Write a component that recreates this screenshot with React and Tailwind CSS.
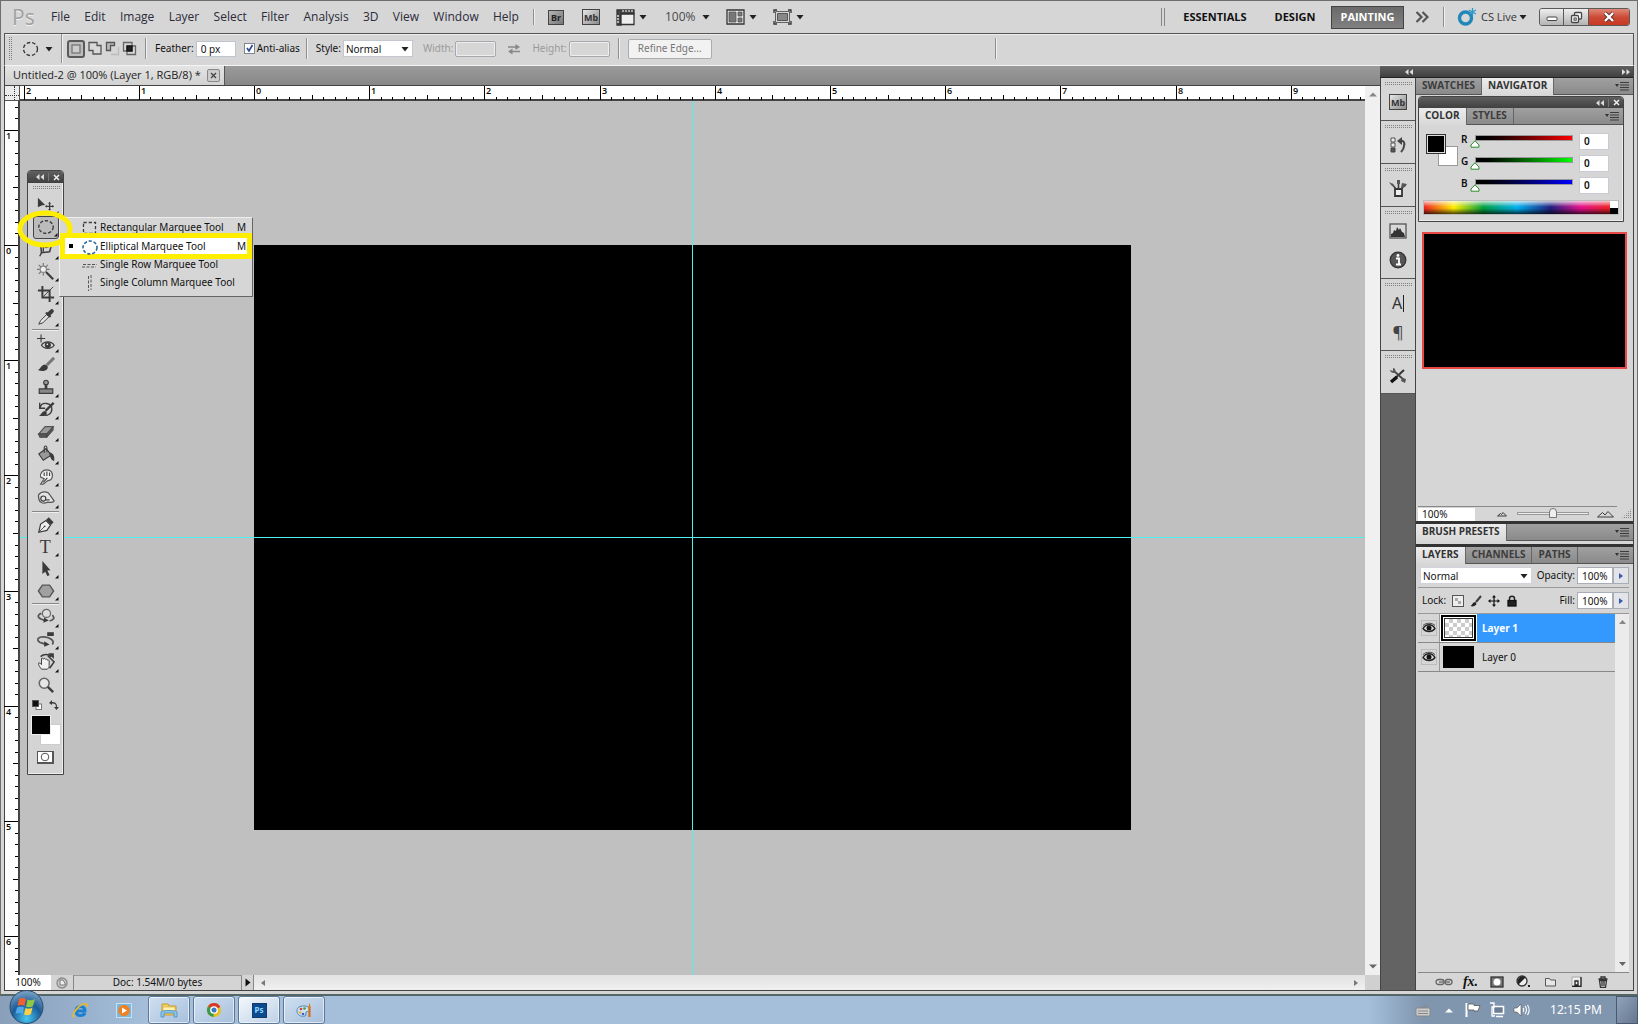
import React from "react";

const UI = "font-['Noto_Sans','Open_Sans',sans-serif]";
const UNIT = 115.2;

function Svg({ w = 20, h = 20, box, children, className = "" }) {
  return (
    <svg
      width={w}
      height={h}
      viewBox={box || `0 0 ${w} ${h}`}
      fill="none"
      stroke="#3c3c3c"
      strokeWidth="1.3"
      className={"shrink-0 " + className}
      aria-hidden="true"
    >
      {children}
    </svg>
  );
}

const Tri = ({ className = "" }) => (
  <Svg w={8} h={6} className={className}>
    <path d="M0.5 1h7L4 5.5z" fill="#222" stroke="none" />
  </Svg>
);

const Sep = ({ className = "" }) => (
  <div className={"w-px shrink-0 self-stretch border-r border-[#f0f0f0] bg-[#8f8f8f] box-content " + className} />
);

/* ---------- Menu bar ---------- */

const MENUS = ["File", "Edit", "Image", "Layer", "Select", "Filter", "Analysis", "3D", "View", "Window", "Help"];

function MenuBar() {
  return (
    <header className="flex h-8 shrink-0 items-center pl-2 pr-1">
      <span className="w-[39px] text-[21px] leading-6 text-[#a0a0a0] font-['Open_Sans'] [text-shadow:0_1px_0_#f4f4f4]">Ps</span>
      <nav className="flex w-[468px] justify-between text-xs text-[#2b2b3a] font-['Open_Sans']">
        {MENUS.map((m) => (
          <button key={m} className="leading-5">{m}</button>
        ))}
      </nav>
      <Sep className="my-2 ml-3.5" />
      <div className="ml-[13px] flex items-center">
        <button aria-label="Launch Bridge">
          <span className="flex h-[15px] w-4 items-center justify-center border border-[#444] bg-gradient-to-br from-[#b5b5b5] to-[#777] text-[9px] font-bold leading-none text-[#222]">Br</span>
        </button>
        <button aria-label="Launch Mini Bridge" className="ml-[18px]"><MbIcon /></button>
        <button aria-label="View extras" className="ml-4 flex items-center gap-1">
          <Svg w={19} h={17}>
            <path d="M1 1h17v4H5v11H1z" fill="#444" stroke="#333" />
            <path d="M5 5h13v10.500H5z" fill="#eee" stroke="#333" />
            <path d="M7 1v2M10 1v2M13 1v2M16 1v2M1 7h2M1 10h2M1 13h2" stroke="#ddd" />
          </Svg>
          <Tri />
        </button>
        <button className="ml-[18px] flex items-center gap-1.5 text-xs text-[#4a4a4a] font-['Open_Sans']">
          100% <Tri />
        </button>
        <button aria-label="Arrange documents" className="ml-4 flex items-center gap-1">
          <Svg w={19} h={16}>
            <path d="M1 1h17v14H1z" fill="#ececec" stroke="#333" />
            <path d="M3 3h7v10H3zM12 3h4v4h-4zM12 9h4v4h-4z" fill="#777" stroke="#555" strokeWidth=".8" />
          </Svg>
          <Tri />
        </button>
        <button aria-label="Screen mode" className="ml-4 flex items-center gap-1">
          <Svg w={19} h={16}>
            <path d="M1 4V1h3M15 1h3v3M18 12v3h-3M4 15H1v-3" stroke="#333" />
            <path d="M4.500 4.500h10v7h-10z" fill="#888" stroke="#555" strokeWidth="1" />
            <path d="M2.500 2.500h14v11h-14z" stroke="#555" strokeWidth=".9" />
          </Svg>
          <Tri />
        </button>
      </div>
      <div className="flex-1" />
      <div className="flex h-[18px] gap-px">
        <div className="w-px bg-[#888]" />
        <div className="ml-px w-px bg-[#888]" />
      </div>
      <div className="flex items-center text-[11px] font-bold font-['Open_Sans'] text-[#111]">
        <button className="ml-[15px] w-[70px]">ESSENTIALS</button>
        <button className="ml-[22px] w-[46px]">DESIGN</button>
        <button className="ml-[13px] h-[23px] w-[73px] border border-[#444] bg-gradient-to-b from-[#6a6a6a] to-[#808080] text-white">PAINTING</button>
      </div>
      <button aria-label="More workspaces" className="ml-[11px]">
        <Svg w={14} h={14}><path d="M1.500 2l5 5-5 5M7.500 2l5 5-5 5" stroke="#555" strokeWidth="2.200" /></Svg>
      </button>
      <Sep className="my-1.5 ml-3.5" />
      <button className="ml-3 flex items-center text-[11px] text-[#333] font-['Open_Sans']">
        <Svg w={20} h={18}>
          <circle cx="8.500" cy="10" r="6" stroke="#2088b8" strokeWidth="3.400" />
          <path d="M15.500 0v8M12 2l7 4M19 2l-7 4" stroke="#2f98c8" strokeWidth="1.300" />
        </Svg>
        <span className="ml-1 whitespace-nowrap">CS Live</span>
        <Tri className="ml-0.5" />
      </button>
      <div className="ml-3 flex h-[18px] w-[91px] shrink-0 overflow-hidden rounded-[3px] border border-[#5a5a5a]">
        <button aria-label="Minimize" className="flex w-6 items-center justify-center border-r border-[#5a5a5a] bg-gradient-to-b from-[#eee] to-[#b4b4b4]">
          <Svg w={12} h={12}><rect x="1" y="6" width="10" height="3.500" rx="1" fill="#fff" stroke="#444" strokeWidth="1" /></Svg>
        </button>
        <button aria-label="Restore" className="flex w-[25px] items-center justify-center border-r border-[#5a5a5a] bg-gradient-to-b from-[#eee] to-[#b4b4b4]">
          <Svg w={13} h={13}>
            <rect x="4.500" y="1.500" width="7" height="6.500" rx="1" fill="#fff" stroke="#444" />
            <rect x="1.500" y="4.500" width="7" height="7" rx="1" fill="#fff" stroke="#444" />
            <rect x="4" y="7" width="2.200" height="2.200" stroke="#444" strokeWidth="1" />
          </Svg>
        </button>
        <button aria-label="Close" className="flex flex-1 items-center justify-center bg-gradient-to-b from-[#e08878] via-[#cc4a36] to-[#c83822]">
          <Svg w={14} h={12}>
            <path d="M3 2l8 8M11 2l-8 8" stroke="#5a3030" strokeWidth="4" />
            <path d="M3 2l8 8M11 2l-8 8" stroke="#fff" strokeWidth="2.400" />
          </Svg>
        </button>
      </div>
    </header>
  );
}

function MbIcon() {
  return (
    <span className="flex h-4 w-[18px] items-center justify-center border border-[#444] bg-gradient-to-br from-[#e8e8e8] to-[#8a8a8a] text-[9px] font-bold leading-none text-[#333]">
      Mb
    </span>
  );
}

/* ---------- Options bar ---------- */

function Grip({ className = "" }) {
  return <div className={"bg-[conic-gradient(#808080_25%,transparent_0)] bg-[length:2px_2px] " + className} />;
}

function OptionsBar() {
  return (
    <div className="flex h-[33px] shrink-0 items-center border border-[#555] border-b-[#f4f4f4] pb-0.5 pl-[3px] text-[10px] text-[#111] shadow-[inset_0_1px_0_#eee]">
      <Grip className="h-6 w-1" />
      <button aria-label="Tool preset" className="ml-2.5 flex items-center gap-1.5">
        <Svg w={17} h={16}><ellipse cx="8.500" cy="8" rx="7" ry="6.500" strokeDasharray="3.500 2" stroke="#333" /></Svg>
        <Tri />
      </button>
      <Sep className="ml-2" />
      <div className="ml-1 flex items-center">
        <button aria-label="New selection" className="mr-[3px] flex h-[18px] w-[18px] items-center justify-center rounded-[3px] border-2 border-[#5a5a5a] bg-[#bdbdbd]">
          <Svg w={10} h={10}><rect x="1" y="1" width="8" height="8" fill="#ccc" stroke="#777" /></Svg>
        </button>
        <button aria-label="Add to selection">
          <Svg w={15} h={15}><path d="M1 1.500h8v3h4v8.500H5V9.500H1z" fill="#d8d8d8" stroke="#555" /></Svg>
        </button>
        <button aria-label="Subtract from selection" className="ml-0.5">
          <Svg w={15} h={15}><path d="M1.500 9.500v-8h8v3h-4v5z" fill="#bbb" stroke="#555" /><path d="M6 13.500h7.500V6" stroke="#bbb" /></Svg>
        </button>
        <button aria-label="Intersect with selection" className="ml-0.5">
          <Svg w={15} h={15}><path d="M1.500 1.500h8.500v8.500h-8.500zM5 5h8.500v8.500H5z" stroke="#666" /><rect x="5" y="5" width="5" height="5" fill="#222" stroke="#111" /></Svg>
        </button>
      </div>
      <Sep className="my-1 ml-2" />
      <label className="ml-2 flex items-center gap-0.5">
        Feather:
        <input defaultValue="0 px" className="h-4 w-10 border border-[#bfc5cc] bg-white px-1 text-[10px]" />
      </label>
      <label className="ml-2 flex items-center gap-0.5 whitespace-nowrap">
        <span className="relative flex">
          <input type="checkbox" defaultChecked className="h-[11px] w-[11px] appearance-none border border-[#7d8794] bg-white" />
          <Svg w={11} h={11} className="pointer-events-none absolute left-0 top-0"><path d="M3 5l2 3 3.500-6" stroke="#2a4a9a" strokeWidth="1.700" /></Svg>
        </span>
        Anti-alias
      </label>
      <Sep className="my-1 ml-1.5" />
      <label className="ml-2 flex items-center gap-0.5">
        Style:
        <span className="relative">
          <select className="h-[17px] w-[70px] appearance-none border border-[#c4c8ce] bg-white px-0.5 text-[10px] leading-none">
            <option>Normal</option>
          </select>
          <Tri className="pointer-events-none absolute right-1 top-1.5" />
        </span>
      </label>
      <label className="ml-2.5 flex items-center gap-0.5 text-[#9a9a9a]">
        Width:
        <input disabled className="h-4 w-[41px] rounded-[2px] border border-[#a5a9ad] bg-[#d6d6d6] shadow-[inset_0_0_0_1px_#eee]" />
      </label>
      <button aria-label="Swap width and height" className="ml-3">
        <Svg w={12} h={12}><path d="M0 4h8M12 8.500H3" stroke="#888" strokeWidth="1.500" /><path d="M7.500 1L12 4 7.500 7zM4.500 5.500L0 8.500l4.500 3z" fill="#888" stroke="none" /></Svg>
      </button>
      <label className="ml-3 flex items-center gap-0.5 text-[#9a9a9a]">
        Height:
        <input disabled className="h-4 w-[41px] rounded-[2px] border border-[#a5a9ad] bg-[#d6d6d6] shadow-[inset_0_0_0_1px_#eee]" />
      </label>
      <Sep className="my-1 ml-2" />
      <button className="ml-2 h-5 w-[84px] rounded-[2px] border border-[#a8adb2] bg-[#f2f2f2] text-[#777]">Refine Edge...</button>
      <Sep className="my-1 ml-[283px]" />
    </div>
  );
}

/* ---------- Document area ---------- */

function Ruler({ vertical, origin }) {
  const marks = [];
  const last = vertical ? 63 : 96;
  for (let i = -20; i <= last; i++) {
    const p = Math.round(origin + (i * UNIT) / 10);
    if (p < 0) continue;
    const len = i % 10 === 0 ? 14 : i % 5 === 0 ? 5 : 3;
    marks.push(
      vertical ? (
        <rect key={i} x={13 - len} y={p} width={len} height="1" />
      ) : (
        <rect key={i} x={p} y={14 - len} width="1" height={len} />
      )
    );
    if (i % 10 === 0)
      marks.push(
        <text key={"t" + i} x={vertical ? 1 : p + 2} y={vertical ? p + 9 : 8} fontSize="9" fontWeight="600">
          {Math.abs(i / 10)}
        </text>
      );
  }
  return (
    <svg
      className={
        "block overflow-visible bg-white fill-black font-['Open_Sans'] " +
        (vertical ? "h-full w-[15px] border-r-2 border-[#444]" : "h-[15px] w-full border-b-2 border-[#444]")
      }
      aria-hidden="true"
    >
      {marks}
    </svg>
  );
}

function Canvas() {
  return (
    <div className="relative min-w-0 flex-1 bg-[#c0c0c0]">
      <div className="absolute left-[234px] top-[144px] h-[585px] w-[877px] bg-black" />
      <div className="absolute inset-y-0 left-[672px] w-px bg-[#55eeee]" />
      <div className="absolute inset-x-0 top-[436px] h-px bg-[#55eeee]" />
      <Toolbox />
      <Flyout />
      <svg className="pointer-events-none absolute -left-[3px] top-[107px] overflow-visible" width="58" height="40" fill="none" aria-hidden="true">
        <ellipse cx="28" cy="21" rx="25" ry="16" stroke="#ffee00" strokeWidth="5" />
      </svg>
    </div>
  );
}

const Arrow = ({ d }) => (
  <Svg w={6} h={8}><path d={d} fill="#777" stroke="none" /></Svg>
);

function DocumentArea() {
  return (
    <section className="flex min-w-0 flex-1 flex-col">
      <div className="flex h-[19px] shrink-0 bg-gradient-to-b from-[#9b9b9b] to-[#878787]">
        <div className="flex w-[220px] items-center justify-between border-r border-[#555] bg-gradient-to-b from-[#e4e4e4] to-[#d2d2d2] pl-2 pr-1 text-[11px] font-medium text-[#222] font-['Open_Sans']">
          <span className="whitespace-nowrap">Untitled-2 @ 100% (Layer 1, RGB/8) *</span>
          <button aria-label="Close document" className="flex h-[13px] w-[13px] items-center justify-center rounded-[2px] border border-[#888] bg-[#ccc]">
            <Svg w={7} h={7}><path d="M1 1l5 5M6 1L1 6" stroke="#444" /></Svg>
          </button>
        </div>
      </div>
      <div className="flex min-h-0 flex-1">
        <div className="flex min-w-0 flex-1 flex-col">
          <div className="flex h-4 shrink-0 border-t border-[#444]">
            <div className="relative w-[15px] shrink-0 border-b border-r border-[#555] bg-[#ececec]">
              <div className="absolute inset-y-0 right-1 border-r border-dotted border-[#333]" />
              <div className="absolute inset-x-0 bottom-1 border-b border-dotted border-[#333]" />
            </div>
            <div className="min-w-0 flex-1"><Ruler origin={234} /></div>
          </div>
          <div className="flex min-h-0 flex-1">
            <div className="w-[15px] shrink-0"><Ruler vertical origin={144} /></div>
            <Canvas />
          </div>
          <div className="flex h-[15px] shrink-0 bg-[#d4d4d4] text-[10px] text-[#111]">
            <label className="flex">
              <span className="sr-only">Zoom level</span>
              <input defaultValue="100%" className="w-[46px] bg-white text-center text-[10px]" />
            </label>
            <button aria-label="Document info" className="flex w-[23px] items-center justify-center border-r border-[#888]">
              <Svg w={12} h={12}><circle cx="6" cy="6" r="5" fill="#ccc" stroke="#888" /><path d="M4 3v5h5V6L7 3z" fill="#eee" stroke="#777" strokeWidth="1" /></Svg>
            </button>
            <div className="w-[167px] border-t border-[#999] text-center leading-[13px]">Doc: 1.54M/0 bytes</div>
            <button aria-label="Status menu" className="flex w-[13px] items-center justify-center border-x border-[#888]">
              <Svg w={6} h={9}><path d="M0.500 0.500v8L5.500 4.500z" fill="#111" stroke="none" /></Svg>
            </button>
            <div className="flex flex-1 items-center justify-between bg-gradient-to-b from-[#e2e2e2] to-[#f0f0f0] px-1.5">
              <Arrow d="M5 1v6L1 4z" />
              <Arrow d="M1 1v6l4-3z" />
            </div>
          </div>
        </div>
        <div className="flex w-[15px] shrink-0 flex-col">
          <div className="flex flex-1 flex-col items-center justify-between border-t border-[#444] bg-[#f0f0f0] py-1.5">
            <Svg w={8} h={5}><path d="M0 4.500h8L4 0.500z" fill="#888" stroke="none" /></Svg>
            <Svg w={8} h={5}><path d="M0 0.500h8L4 4.500z" fill="#666" stroke="none" /></Svg>
          </div>
          <div className="h-[15px] bg-[#d0d0d0]" />
        </div>
      </div>
    </section>
  );
}

/* ---------- Toolbox ---------- */

const K = "#3a3a3a";
const TOOLS = [
  [
    ["Move", <><path d="M1 2l8 8-3.200.3L1 12.500z" fill={K} stroke="none" /><path d="M10 11.500h8M14 7.500v8" strokeWidth="1.400" /><path d="M8.800 11.500l2-1.600v3.200zM19 11.500l-2-1.600v3.200zM14 6.500l-1.600 2h3.200zM14 16.500l-1.600-2h3.200z" fill={K} stroke="none" /></>],
    ["Elliptical Marquee", <ellipse cx="10" cy="10" rx="8" ry="7" strokeDasharray="3.600 2" strokeWidth="1.500" />, true],
    ["Polygonal Lasso", <><path d="M4 4l6 3 6-2-2 7-9 1z" strokeWidth="1.700" /><path d="M7 3v9M5 13l-2 4" strokeWidth="1.500" /></>],
    ["Magic Wand", <><path d="M10 10l8 8" strokeWidth="2.400" /><circle cx="7" cy="7" r="3.500" fill="#eee" stroke="#888" /><path d="M7 0v3M7 11v3M0 7h3M11 7h3M2 2l2.500 2.500M12 2L9.500 4.500M2 12l2.500-2.500" stroke="#777" /></>],
    ["Crop", <><path d="M6 1v13h13M1 6h13v13" strokeWidth="2.200" /><path d="M18 2L7 13" strokeWidth="1" /></>],
    ["Eyedropper", <><path d="M2 18l2-4 7-7 2.500 2.500-7 7z" fill="#e6e6e6" strokeWidth="1.100" /><path d="M10 5l5 5" strokeWidth="2.600" /><path d="M13 7l3.500-3.500" strokeWidth="4.500" strokeLinecap="round" /></>],
  ],
  [
    ["Red Eye", <><path d="M0 5h9M4.500 0.500v9" strokeWidth="1.200" /><path d="M5 12.500c3-5 11-5 14 0-3 4.500-11 4.500-14 0z" fill="#ddd" strokeWidth="1.500" /><circle cx="12" cy="12.300" r="2.800" fill={K} /><circle cx="11.500" cy="11.500" r=".9" fill="#fff" stroke="none" /></>],
    ["Brush", <><path d="M19 2l-8 8" strokeWidth="3.400" stroke="#777" /><path d="M1 15.500c3-1 4-6 8-6 3 1 4 3 2 5.500-3 2-6 2.500-10 .5z" fill={K} stroke="none" /></>],
    ["Clone Stamp", <><circle cx="10" cy="4" r="2.600" fill="#999" /><path d="M9.300 6v5M10.700 6v5" strokeWidth="1.500" /><path d="M2.500 11h15v5h-15z" fill="#888" /></>],
    ["History Brush", <><path d="M3 2v6h6M3.500 7c2-7 13-5 13 2 0 6-6 8-9 6" strokeWidth="1.500" /><path d="M18.500 2l-9 9" strokeWidth="2.600" /><path d="M2 16c3 0 3-5 7-5 3 1 2 4 0 5-2 1-4 1-7 0z" fill={K} stroke="none" /></>],
    ["Eraser", <><path d="M2 12l7-8h9l-7 8z" fill="#999" stroke="#555" /><path d="M1.500 12H11v4H3zM11 12l7-8v4l-7 8z" fill="#555" stroke="#444" strokeWidth=".8" /></>],
    ["Paint Bucket", <><path d="M2 10l8-6 6 7-9 6z" fill="#999" strokeWidth="1.300" /><path d="M8 9V3c0-2.500 3-2.500 3 0v5" strokeWidth="1.200" /><path d="M14 9c4 1 5 4 4.500 8-3-1-3-4-4.500-8z" fill={K} /></>],
    ["Smudge", <><path d="M4 18l4-6-4-2c-1-4 2-8 7-8 4 0 7 3 6 8-1 3-3 4-5 4l-5 4z" fill="#eee" stroke="#555" strokeWidth="1.300" /><path d="M8 5v4M11 4v5M14 5v4M11.500 11L7 16" strokeWidth="1.200" /></>],
    ["Dodge", <><path d="M2 5c3-4 10-4 12 0l5 7c-2 3-5 1.500-7 1.500-5 2-9 1-10-3.500 0-2-1-4 0-5z" fill="#e4e4e4" stroke="#555" strokeWidth="1.400" /><circle cx="7" cy="9.500" r="2.800" /><path d="M10 11h4" /></>],
  ],
  [
    ["Pen", <><path d="M2 18l2-9 6-4 5 5-4 6z" fill="#eee" strokeWidth="1.300" /><path d="M2 18l6-6" strokeWidth="1" /><circle cx="8.500" cy="11.500" r="1" fill={K} stroke="none" /><path d="M11.500 3l5.500 5.500" strokeWidth="4.200" /></>],
    ["Type", <text x="3" y="16.500" fontSize="20" fill={K} stroke="none" fontFamily="Liberation Serif">T</text>],
    ["Path Selection", <path d="M6 1l9 10.500-3.500.3 2.500 5-2.400 1.200-2.400-5L6 15.500z" fill={K} stroke="none" />],
    ["Polygon", <path d="M6 3.500h8l4.500 6.500-4.500 6.500H6L1.500 10z" fill="#a0a0a0" stroke="#555" strokeWidth="1.500" />],
  ],
  [
    ["3D Rotate", <><path d="M5 6c-6 2-4 6 3 7.500M17 8c3 3 2 5-3 6.500" stroke="#555" strokeWidth="1.900" /><circle cx="10.500" cy="6" r="4.500" fill="#ddd" stroke="#666" /><path d="M8 10.500l5 3.500-6 2.500z" fill={K} stroke="none" /></>],
    ["3D Camera", <><path d="M17 15c3-4-2-8-9-8.500C1 6-1 10 3 12.500c2 1 4 1.500 6 2" stroke="#555" strokeWidth="1.900" /><path d="M8 11.500l6 3.500-6 2.500z" fill={K} stroke="none" /><path d="M12 2h6v3h-6z" fill={K} /></>],
    ["Rotate View", <><path d="M4 4c3-3 9-3 12 0M12 3l7 7-5 7" strokeWidth="1.700" /><path d="M14 1l4 0v4z" fill={K} /><path d="M5 18c-2-3-4-5-3-7 2 0 2 1 3 2V6c1-1 2 0 2 1 1-2 2-1 2.500 0 1-1 2 0 2 1 1-1 2 0 2 1v5c0 2-1 3-2 4z" fill="#f0f0f0" strokeWidth="1.100" stroke="#444" /></>],
    ["Zoom", <><circle cx="8" cy="8" r="5.500" fill="#e6e6e6" stroke="#666" strokeWidth="1.700" /><path d="M12 12l6 6" strokeWidth="2.600" /></>, false, true],
  ],
];

function Toolbox() {
  return (
    <aside className="absolute left-[7px] top-[69px] w-[37px] rounded-t-[4px] border border-[#444] bg-[#d4d4d4] pb-2.5 shadow-[inset_-1px_-1px_0_#eee]">
      <div className="flex h-3 items-center justify-end gap-1 rounded-t-[3px] bg-gradient-to-b from-[#606060] to-[#404040] pr-[3px]">
        <Chevrons />
        <div className="h-2 w-px bg-[#777]" />
        <Svg w={7} h={7}><path d="M1 1l5 5M6 1L1 6" stroke="#eee" strokeWidth="1.500" /></Svg>
      </div>
      <Grip className="mx-auto mb-1 mt-[3px] h-1 w-7" />
      {TOOLS.map((group, i) => (
        <React.Fragment key={i}>
          {i > 0 && <div className="mx-1 my-px h-0.5 border-t border-[#888] bg-[#eee]" />}
          <div className={"grid auto-rows-fr " + ["h-[134px]", "h-[178px]", "h-[88px]", "h-[90px]"][i]}>
            {group.map(([name, art, on, plain]) => (
              <button
                key={name}
                aria-label={name + " tool"}
                className={"relative mx-auto flex w-[26px] items-center justify-center rounded-[3px] " + (on ? "border border-[#444] bg-[#bcbcbc]" : "")}
              >
                <Svg w={18} h={18} box="0 0 20 20">{art}</Svg>
                {!plain && <Svg w={4} h={4} className="absolute bottom-px right-0"><path d="M3.500 0v3.500H0z" fill="#111" stroke="none" /></Svg>}
              </button>
            ))}
          </div>
        </React.Fragment>
      ))}
      <div className="mt-1 flex items-center justify-between px-1">
        <button aria-label="Default colors">
          <Svg w={10} h={10}><rect x="4" y="4" width="5.500" height="5.500" fill="#fff" stroke="#777" strokeWidth="1" /><rect x="0.500" y="0.500" width="6" height="6" fill="#111" stroke="#555" strokeWidth="1" /></Svg>
        </button>
        <button aria-label="Swap colors">
          <Svg w={10} h={10}><path d="M2 3c4-1 6 1 5.500 5" strokeWidth="1.300" /><path d="M0 3l3-3v5zM5 7h5l-2.500 3z" fill={K} stroke="none" /></Svg>
        </button>
      </div>
      <div className="relative ml-[3px] mt-[5px] h-[30px] w-[30px]">
        <button aria-label="Background color" className="absolute bottom-0 right-0 h-[21px] w-[21px] border border-[#ccc] bg-white" />
        <button aria-label="Foreground color" className="absolute left-0 top-0 h-5 w-5 border border-[#eee] bg-black" />
      </div>
      <button aria-label="Quick mask" className="mx-auto mt-1.5 flex h-[13px] w-[17px] items-center justify-center border border-b-2 border-r-2 border-[#555] bg-white">
        <Svg w={10} h={10}><circle cx="5" cy="5" r="3.800" stroke="#555" strokeWidth="1" /></Svg>
      </button>
    </aside>
  );
}

function Chevrons({ flip }) {
  return (
    <Svg w={8} h={6} className={flip ? "rotate-180" : ""}><path d="M3.500 0v6L0 3zM8 0v6L4.500 3z" fill="#ddd" stroke="none" /></Svg>
  );
}

const FLYOUT = [
  ["Rectangular Marquee Tool", "M", <path d="M1.500 3.500h12v11h-12z" strokeDasharray="3.200 2" />],
  ["Elliptical Marquee Tool", "M", <ellipse cx="8" cy="9.500" rx="7" ry="6.500" stroke="#2a6a98" strokeWidth="1.600" strokeDasharray="3.200 1.800" />],
  ["Single Row Marquee Tool", "", <path d="M1 8.500h14M0 11h14" strokeDasharray="3 1.500" stroke="#555" strokeWidth="1" />],
  ["Single Column Marquee Tool", "", <path d="M6.500 2v15M9 1v15" strokeDasharray="3 1.500" stroke="#555" strokeWidth="1" />],
];

function Flyout() {
  return (
    <div role="menu" className="absolute left-[39px] top-[116px] w-[194px] border border-[#eee] border-b-[#666] border-r-[#666] bg-[#d6d6d6] pb-[5px] text-[10px] text-[#111]">
      {FLYOUT.map(([name, key, art], i) => (
        <button
          key={name}
          role="menuitem"
          className={
            "relative flex w-full items-center pr-1.5 " +
            (i === 1
              ? "z-10 -my-1 h-[26px] border-[5px] border-[#ffee00] bg-white pl-[17px] pr-px"
              : i === 0 ? "h-[19px] pl-[22px]" : "h-[18px] pl-[22px]")
          }
        >
          {i === 1 && <span className="absolute left-1 h-1 w-1 bg-black" />}
          <Svg w={16} h={17}>{art}</Svg>
          <span className="ml-0.5 whitespace-nowrap">{name}</span>
          <span className="ml-auto">{key}</span>
        </button>
      ))}
    </div>
  );
}

/* ---------- Right dock ---------- */

const DOCK = [
  [["Mini Bridge", <MbIcon />]],
  [["History", <Svg w={18} h={18}><path d="M2 2h4v4H2zM2 7h4v4H2z" fill="#eee" stroke="#555" strokeWidth="1" /><path d="M2 12h4v4H2z" fill="#555" stroke="#444" strokeWidth="1" /><path d="M11 5c4-1 5 2 4 5 0 3-1 4-3 6" stroke="#444" strokeWidth="2" /><path d="M13 1v8L8 5z" fill="#444" stroke="none" /></Svg>]],
  [["Brushes", <Svg w={18} h={18}><path d="M6 10h7v7H6z" fill="#eee" stroke="#333" strokeWidth="1.800" /><path d="M7 10L3 5M9.500 10V2M12 10l4-4" strokeWidth="1.600" /><path d="M0 3l4 2 2 4-4-3zM8 1h3v4H8zM13 4l5 1-2 3-4 1z" fill="#555" stroke="none" /></Svg>]],
  [
    ["Histogram", <Svg w={18} h={18}><rect x="1" y="2" width="16" height="14" fill="#d8d8d8" stroke="#555" /><path d="M2 15v-3l2-1 1-3 2 1 1-4 2 3 1-2 2 4 2 1 1 4z" fill="#333" stroke="none" /></Svg>],
    ["Info", <Svg w={18} h={18}><circle cx="9" cy="9" r="7.800" fill="#555" stroke="#333" /><path d="M7 7.500h3V13M7 13.500h5" stroke="#fff" strokeWidth="1.800" /><circle cx="9" cy="4.500" r="1.400" fill="#fff" stroke="none" /></Svg>],
  ],
  [
    ["Character", <span className="border-r border-[#222] pr-px text-base leading-[17px] text-[#333]">A</span>],
    ["Paragraph", <span className="text-[17px] leading-[18px] text-[#444]">¶</span>],
  ],
  [["Tool Presets", <Svg w={18} h={18}><path d="M3 15L15 4" stroke="#333" strokeWidth="2" /><path d="M2 16l6-5" stroke="#111" strokeWidth="3.500" /><path d="M5 5l10 9" stroke="#444" strokeWidth="1.700" /><path d="M1 4l3 1V2c3 0 3 4 1 5-2 0-4-1-4-3zM13 12l4 1-1 4-4-2z" fill="#555" stroke="none" /></Svg>]],
];

function IconDock() {
  return (
    <div className="flex w-9 shrink-0 flex-col border-x border-[#444] bg-[#636363]">
      {DOCK.map((g, i) => (
        <div key={i} className="flex flex-col items-center border-b border-[#555] bg-[#d6d6d6] pb-[9px] pt-1">
          <Grip className="h-[3px] w-7" />
          <div className="mt-2 flex flex-col gap-[11px]">
            {g.map(([n, ic]) => (
              <button key={n} aria-label={n} className="flex h-[18px] w-7 items-center justify-center">{ic}</button>
            ))}
          </div>
        </div>
      ))}
    </div>
  );
}

function Tabs({ items, active }) {
  return (
    <div role="tablist" className="flex h-[17px] shrink-0 items-stretch border-b border-[#555] bg-gradient-to-b from-[#a0a0a0] to-[#8a8a8a] text-[10px] font-bold text-[#333] font-['Open_Sans']">
      {items.map((t) => (
        <button
          key={t}
          role="tab"
          aria-selected={t === active}
          className={"flex items-start whitespace-nowrap border-r border-[#666] px-1.5 leading-[15px] " + (t === active ? "-mb-px bg-gradient-to-b from-[#ececec] to-[#d8d8d8]" : "text-[#3c3c3c]")}
        >
          {t}
        </button>
      ))}
      <button aria-label={active + " panel menu"} className="ml-auto mr-1 flex items-center">
        <Svg w={14} h={10}><path d="M0 3h4L2 6z" fill="#333" stroke="none" /><path d="M5 1.500h9M5 4h9M5 6.500h9M5 9h9" strokeWidth="1" /></Svg>
      </button>
    </div>
  );
}

const CHANNELS = [
  ["R", "bg-linear-to-r from-black to-[#ff0000]"],
  ["G", "bg-linear-to-r from-black to-[#00ff00]"],
  ["B", "bg-linear-to-r from-black to-[#0000ff]"],
];

function ColorPanel() {
  return (
    <div className="absolute left-0.5 top-px w-[206px] overflow-hidden rounded-t-[4px] border border-[#444] bg-[#d6d6d6] shadow-[inset_-1px_-1px_0_#eee]">
      <div className="flex h-[11px] items-center justify-end gap-1 bg-gradient-to-b from-[#606060] to-[#404040] pr-[3px]">
        <Chevrons />
        <div className="h-2 w-px bg-[#777]" />
        <Svg w={7} h={7}><path d="M1 1l5 5M6 1L1 6" stroke="#eee" strokeWidth="1.500" /></Svg>
      </div>
      <Tabs items={["COLOR", "STYLES"]} active="COLOR" />
      <div className="flex px-[7px] pt-[7px]">
        <div className="relative mt-0.5 h-8 w-8">
          <button aria-label="Background swatch" className="absolute bottom-0 right-0 h-5 w-5 border border-[#999] bg-white" />
          <button aria-label="Foreground swatch" className="absolute left-0 top-0 h-5 w-5 border-2 border-[#333] bg-black outline-1 -outline-offset-2 outline-[#ddd] outline-solid" />
        </div>
        <div className="ml-[3px] flex flex-1 flex-col gap-1">
          {CHANNELS.map(([c, g]) => (
            <div key={c} className="flex h-[18px] items-center text-[10px] font-semibold">
              <label htmlFor={"ch" + c} className="w-3.5 pb-1">{c}</label>
              <div className="relative h-3 w-[98px]">
                <div className={"h-1.5 border border-[#999] " + g} />
                <input id={"ch" + c} type="range" min="0" max="255" defaultValue="0" className="absolute inset-0 w-full opacity-0" />
                <Svg w={10} h={8} className="pointer-events-none absolute -left-[5px] top-[5px]"><path d="M5 0.800L9 5v2.200H1V5z" fill="#fff" stroke="#2c8a2c" strokeWidth="1" /></Svg>
              </div>
              <input aria-label={c + " value"} defaultValue="0" className="ml-1.5 h-[17px] w-[30px] border border-[#c8ccd2] bg-white pl-1 text-[10px]" />
            </div>
          ))}
        </div>
      </div>
      <div className="mx-1 mb-1.5 mt-1.5 flex h-[15px] border border-[#bbb]">
        <div className="flex-1 bg-[linear-gradient(to_bottom,rgba(255,255,255,.75),transparent_45%,transparent_55%,rgba(0,0,0,.7)),linear-gradient(to_right,#ee2222,#ffee00_16%,#00a040_32%,#00b0f0_50%,#202080_68%,#e0108c_84%,#ee2222)]" />
        <div className="flex w-2 flex-col"><div className="flex-1 bg-white" /><div className="flex-1 bg-black" /></div>
      </div>
    </div>
  );
}

const Divider = () => <div className="h-[3px] shrink-0 bg-[#333]" />;

function Eye() {
  return (
    <Svg w={14} h={12}><path d="M1 6.500c3-5 9-5 12 0-3 4-9 4-12 0z" fill="#ddd" stroke="#222" strokeWidth="1.300" /><circle cx="7" cy="6" r="2.500" fill="#111" stroke="none" /><path d="M1 3.500c3-3 9-3 12 0" stroke="#444" strokeWidth="1" /></Svg>
  );
}

function PercentField({ label }) {
  return (
    <div className="flex items-center">
      <label className="flex items-center gap-0.5">
        {label}
        <input defaultValue="100%" className="h-[17px] w-9 border border-[#a8adb8] bg-white px-1 text-[10px]" />
      </label>
      <button aria-label={label + " slider"} className="flex h-[17px] w-4 items-center justify-center border border-[#a8adb8] bg-[#e2e4e8]">
        <Svg w={4} h={6}><path d="M0 0v6l4-3z" fill="#3a5ab0" stroke="none" /></Svg>
      </button>
    </div>
  );
}

function Layer({ name, active }) {
  return (
    <li className="flex h-[29px] border-b border-[#888]">
      <button aria-label={"Toggle visibility of " + name} className="flex w-[22px] shrink-0 items-center justify-center border-r border-[#999]">
        <span className="flex h-4 w-4 items-center justify-center border border-[#bbb]"><Eye /></span>
      </button>
      <div className={"flex flex-1 items-center pl-px " + (active ? "bg-[#3399ff] font-bold text-white" : "")}>
        {active ? (
          <div className="flex h-[26px] w-[35px] items-center justify-center border-2 border-black bg-white outline-1 outline-white">
            <div className="h-5 w-[29px] border border-[#333] bg-[conic-gradient(#ccc_25%,#fff_0_50%,#ccc_0_75%,#fff_0)] bg-[length:8px_8px]" />
          </div>
        ) : (
          <div className="mx-0.5 h-[22px] w-[31px] bg-black" />
        )}
        <span className="ml-1.5 pt-px">{name}</span>
      </div>
    </li>
  );
}

function Panels() {
  return (
    <div className="flex w-[217px] shrink-0 flex-col bg-[#d6d6d6] text-[10px] text-[#111]">
      <Tabs items={["SWATCHES", "NAVIGATOR"]} active="NAVIGATOR" />
      <div className="relative flex h-[426px] shrink-0 flex-col">
        <ColorPanel />
        <div className="mx-1.5 mt-[137px] h-[137px] border-2 border-[#e84848] bg-black" />
        <div className="ml-0.5 mr-4 mt-auto border-t border-[#888]" />
        <div className="flex h-[14px] items-center pl-0.5">
          <input aria-label="Navigator zoom" defaultValue="100%" className="h-[13px] w-[57px] bg-white pl-1 text-[10px]" />
          <Svg w={10} h={6} className="ml-[22px]"><path d="M0.500 5h9L6 1.500 4.500 3.500 3.500 2.500z" strokeWidth="1" /></Svg>
          <div className="relative ml-2.5 h-3 w-[72px]">
            <div className="mt-1 h-[3px] border border-[#999] bg-[#eee]" />
            <input aria-label="Zoom slider" type="range" defaultValue="48" className="absolute inset-0 w-full opacity-0" />
            <div className="pointer-events-none absolute left-8 top-0 h-2.5 w-2 rounded-t-full border border-[#777] bg-[#eee]" />
          </div>
          <Svg w={17} h={8} className="ml-2"><path d="M0.500 7h16L11 1.500 8 5 5.500 2.500z" strokeWidth="1" /></Svg>
          <Grip className="ml-auto mr-0.5 h-2.5 w-2.5 [clip-path:polygon(100%_0,100%_100%,0_100%)]" />
        </div>
      </div>
      <Divider />
      <Tabs items={["BRUSH PRESETS"]} active="BRUSH PRESETS" />
      <div className="h-[3px] shrink-0" />
      <Divider />
      <Tabs items={["LAYERS", "CHANNELS", "PATHS"]} active="LAYERS" />
      <div className="ml-0.5 mr-1 flex h-6 shrink-0 items-center justify-between border-b border-[#999]">
        <span className="relative">
          <select aria-label="Blend mode" className="ml-0.5 h-[17px] w-28 appearance-none border border-[#d0d4da] bg-white px-0.5 text-[10px] leading-none">
            <option>Normal</option>
          </select>
          <Tri className="pointer-events-none absolute right-1 top-1.5" />
        </span>
        <PercentField label="Opacity:" />
      </div>
      <div className="ml-0.5 mr-1 flex h-[26px] shrink-0 items-center justify-between border-b border-[#999] pl-1">
        <div className="flex items-center gap-1.5">
          Lock:
          <button aria-label="Lock transparency"><Svg w={12} h={12}><rect x="0.500" y="0.500" width="11" height="11" fill="#eee" stroke="#555" strokeWidth="1" /><path d="M3 3h3v3H3zM6 6h3v3H6z" fill="#aaa" stroke="none" /></Svg></button>
          <button aria-label="Lock pixels"><Svg w={12} h={12}><path d="M11 1L6 7" strokeWidth="2" /><path d="M0.500 11c2-1 2-4 5-4l1 2c-1 2-4 3-6 2z" fill="#222" stroke="none" /></Svg></button>
          <button aria-label="Lock position"><Svg w={12} h={12}><path d="M2 6h8M6 2v8" strokeWidth="1.200" stroke="#111" /><path d="M0 6l2.500-2v4zM12 6L9.500 4v4zM6 0L4 2.500h4zM6 12L4 9.500h4z" fill="#111" stroke="none" /></Svg></button>
          <button aria-label="Lock all" className="ml-px"><Svg w={10} h={12}><path d="M2.500 6V3.500c0-3 5-3 5 0V6" stroke="#222" strokeWidth="1.500" /><rect x="1" y="5.500" width="8" height="5.500" fill="#222" stroke="#111" /></Svg></button>
        </div>
        <PercentField label="Fill:" />
      </div>
      <div className="ml-0.5 mr-1 flex min-h-0 flex-1 border-b border-[#888]">
        <ul className="flex-1">
          <Layer name="Layer 1" active />
          <Layer name="Layer 0" />
        </ul>
        <div className="flex w-3.5 flex-col items-center justify-between bg-[#ebebeb] py-1.5">
          <Svg w={7} h={4}><path d="M0 4h7L3.500 0z" fill="#888" stroke="none" /></Svg>
          <Svg w={7} h={4}><path d="M0 0h7L3.500 4z" fill="#666" stroke="none" /></Svg>
        </div>
      </div>
      <div className="flex h-[17px] shrink-0 items-center justify-between pl-[18px] pr-5 *:flex *:w-5 *:justify-center">
        <button aria-label="Link layers"><Svg w={18} h={8}><path d="M8 4H4M10 4h5" stroke="#777" /><rect x="1" y="1.500" width="8" height="5" rx="2.500" stroke="#666" /><rect x="10" y="1.500" width="7" height="5" rx="2.500" stroke="#666" /></Svg></button>
        <button aria-label="Layer style" className="text-sm font-bold italic leading-4 font-['Liberation_Serif']">fx.</button>
        <button aria-label="Add mask"><Svg w={14} h={12}><rect x="1" y="1" width="12" height="10" fill="#777" stroke="#333" /><circle cx="7" cy="6" r="3.500" fill="#fff" stroke="none" /></Svg></button>
        <button aria-label="Adjustment layer"><Svg w={15} h={13}><circle cx="6" cy="6" r="5" fill="#eee" stroke="#333" /><path d="M2.500 9.500A5 5 0 019.500 2.500z" fill="#222" stroke="none" /><path d="M12 10h2v2h-2z" fill="#222" stroke="none" /></Svg></button>
        <button aria-label="New group"><Svg w={11} h={10}><path d="M0.500 1.500h4l1 1.500h5v6h-10z" fill="#e6e6e6" stroke="#555" strokeWidth="1" /></Svg></button>
        <button aria-label="New layer"><Svg w={11} h={11}><path d="M1 1h9v9H1z" fill="#eee" stroke="#aaa" strokeWidth="1" /><path d="M10 1v9.300H1M4 5h3v4H4z" stroke="#222" /></Svg></button>
        <button aria-label="Delete layer"><Svg w={10} h={12}><path d="M0.500 3h9M3 3V1h4v2M1.500 4.500l1 7h5l1-7zM4 5v5M6 5v5" stroke="#333" /></Svg></button>
      </div>
    </div>
  );
}

/* ---------- Taskbar ---------- */

const APPS = [
  ["Explorer", <Svg w={20} h={18}><path d="M3 3h6l1 2h7v9H3z" fill="#f0d060" stroke="#c89a30" strokeWidth="1" /><path d="M4 6h12v4H4z" fill="#fff3b0" stroke="#d8b850" strokeWidth=".8" /><path d="M2 16V11c0-2 16-2 16 0v5h-3v-4H5v4z" fill="#8cc8ee" stroke="#4a8cc0" strokeWidth=".8" /></Svg>],
  ["Chrome", <Svg w={16} h={16}><circle cx="8" cy="8" r="7" fill="#e8c020" stroke="none" /><path d="M8 8L2 4.300A7 7 0 0114.300 5z" fill="#d83a2a" stroke="none" /><path d="M8 8L2 4.300A7 7 0 007.500 15z" fill="#3a9a48" stroke="none" /><circle cx="8" cy="8" r="3.200" fill="#3c7ac8" stroke="#fff" /></Svg>],
  ["Photoshop", <span className="flex h-[15px] w-[15px] items-center justify-center border border-[#123a6a] bg-[#0a4a90] text-[8px] font-bold leading-none text-[#8cd8ff]">Ps</span>, true],
  ["Paint", <Svg w={17} h={17}><path d="M8 4c5 0 6 3 5 5-1 1-2 0-3 1s1 3-1 4c-4 1-8-1-8-5s3-5 7-5z" fill="#cfe2f2" stroke="#4a88b8" strokeWidth="1" /><circle cx="5" cy="7" r="1.300" fill="#d84040" stroke="none" /><circle cx="8.500" cy="6.500" r="1.300" fill="#4a9a3a" stroke="none" /><circle cx="4" cy="10.500" r="1.300" fill="#e8b030" stroke="none" /><circle cx="7" cy="12" r="1.300" fill="#3a60c0" stroke="none" /><path d="M13.500 15V6" stroke="#d07020" strokeWidth="2.200" /><path d="M12 6l1.500-5L15 6z" fill="#e07820" stroke="none" /></Svg>],
];

function Taskbar() {
  return (
    <footer className="flex h-7 shrink-0 items-center bg-[linear-gradient(to_right,#899fba,#a5bfdb_150px,#a5bfdb_calc(100%-270px),#8095ae_calc(100%-215px),#8095ae)]">
      <button aria-label="Start" className="z-10 -mt-1.5 ml-[9px] h-[34px] w-[35px]">
        <Svg w={35} h={34}>
          <defs>
            <radialGradient id="orb" cx=".5" cy=".85" r=".9"><stop offset="0" stopColor="#48c8f0" /><stop offset=".5" stopColor="#1c5a98" /><stop offset="1" stopColor="#8ab0cc" /></radialGradient>
          </defs>
          <circle cx="17.500" cy="17" r="16.500" fill="url(#orb)" stroke="#2a4a6a" strokeWidth="1" />
          <g stroke="none">
            <path d="M10 9c2-1.500 5-1.500 7 0l-1.500 7c-2-1.500-5-1.500-7 0z" fill="#f06030" />
            <path d="M18.500 9.500c2 1 5 1 7.500-.5l-2 7c-2 1.500-5 1.500-7 .500z" fill="#90c840" />
            <path d="M8 17.500c2-1.500 5-1.500 7 0l-1.500 6.500c-2-1.500-5-1.500-7 0z" fill="#50a8e8" />
            <path d="M16.500 18c2 1 5 1 7-.5L22 24c-2 1.500-5 1.500-7 .5z" fill="#fcd040" />
          </g>
        </Svg>
      </button>
      <button aria-label="Internet Explorer" className="ml-7">
        <Svg w={17} h={17}>
          <path d="M13 11c-1 2-2.500 2.500-4.500 2.500-3 0-4.500-2-4.500-4.500s1.500-4.500 4.500-4.500S13 6.500 13 9H5" stroke="#1c80d0" strokeWidth="3" />
          <path d="M2 15.500c-3-2 3-11 9-13.500 4-1 5 1 4 3" stroke="#e8b830" strokeWidth="1.700" />
        </Svg>
      </button>
      <button aria-label="Media Player" className="ml-[27px]">
        <Svg w={16} h={15}><rect x="0.500" y="0.500" width="15" height="14" fill="#7ab8e0" stroke="#c8e0f0" strokeWidth="1" /><circle cx="8" cy="7.500" r="5.800" fill="#f08020" stroke="none" /><path d="M6 4.500v6l5-3z" fill="#fff" stroke="none" /></Svg>
      </button>
      <div className="ml-4 flex gap-[3px]">
        {APPS.map(([n, ic, on]) => (
          <button
            key={n}
            aria-label={n}
            className={"flex h-7 w-[42px] items-center justify-center rounded-[3px] border border-[#5c7896] shadow-[inset_0_0_0_1px_rgba(255,255,255,.6)] " + (on ? "bg-gradient-to-br from-[#f4f8fc] to-[#bcd0e6]" : "bg-gradient-to-br from-[#cfdff0] to-[#a8c0dc]")}
          >
            {ic}
          </button>
        ))}
      </div>
      <div className="ml-auto flex items-center text-white">
        <Svg w={16} h={13}><rect x="1" y="4" width="14" height="8" rx="1" fill="#ccc" stroke="#888" strokeWidth="1" /><path d="M3 7h10M3 9.500h10M8 4c0-3 4-1 5-3" stroke="#888" strokeWidth="1" /></Svg>
        <Svg w={8} h={5} className="ml-3.5"><path d="M0 4.500h8L4 0.500z" fill="#fff" stroke="none" /></Svg>
        <Svg w={16} h={16} className="ml-3"><path d="M1.500 1v14" stroke="#fff" strokeWidth="2" /><path d="M3 2h6v1.500h6L13 9H9V8H3z" fill="#fff" stroke="#555" strokeWidth=".8" /></Svg>
        <Svg w={16} h={16} className="ml-2"><path d="M4.500 4.500h10v7h-10z" fill="#6a7c94" stroke="#fff" strokeWidth="1.600" /><path d="M7 14.500h7" stroke="#fff" strokeWidth="1.500" /><path d="M1 1h4v4H3v9h3" stroke="#fff" strokeWidth="1.300" /></Svg>
        <Svg w={17} h={16} className="ml-2"><path d="M1 6h3l4-4v12l-4-4H1z" fill="#fff" stroke="#555" strokeWidth=".6" /><path d="M10 6c1 1 1 3 0 4M12 4c2 2 2 6 0 8M14.500 3c2 3 2 7 0 10" stroke="#fff" strokeWidth="1.100" /></Svg>
        <time className="ml-5 whitespace-nowrap text-xs">12:15 PM</time>
        <button aria-label="Show desktop" className="ml-3.5 h-7 w-[22px] border border-[#4a5a6e] bg-gradient-to-br from-[#8fa3bb] to-[#66788e]" />
      </div>
    </footer>
  );
}

export default function App() {
  return (
    <div className={"flex h-screen flex-col overflow-hidden bg-[#d6d6d6] text-[#111] " + UI}>
      <div className="flex min-h-0 flex-1 flex-col border border-b-2 border-[#6e6e6e] border-b-[#566] px-[3px] pb-[3px]">
        <MenuBar />
        <OptionsBar />
        <main className="flex min-h-0 flex-1 border-x border-b border-[#444]">
          <DocumentArea />
          <div className="flex shrink-0 flex-col">
            <div className="flex h-3 items-center justify-between border-b border-[#222] bg-gradient-to-b from-[#606060] to-[#404040] pl-[25px] pr-[3px]">
              <Chevrons />
              <Chevrons flip />
            </div>
            <div className="flex min-h-0 flex-1">
              <IconDock />
              <Panels />
            </div>
          </div>
        </main>
      </div>
      <Taskbar />
    </div>
  );
}
